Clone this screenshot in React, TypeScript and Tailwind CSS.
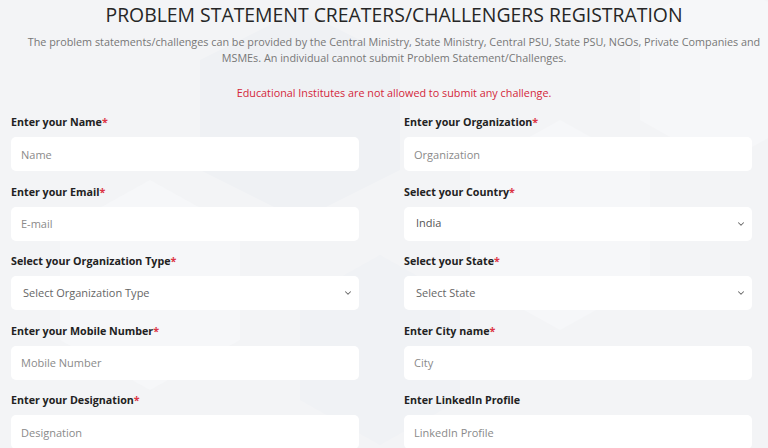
import { ChevronDown } from "lucide-react";

interface Field {
  label: string;
  placeholder: string;
  required?: boolean;
  kind?: "input" | "select";
  value?: string;
}

const fields: Field[] = [
  { label: "Enter your Name", placeholder: "Name", required: true },
  { label: "Enter your Organization", placeholder: "Organization", required: true },
  { label: "Enter your Email", placeholder: "E-mail", required: true },
  { label: "Select your Country", placeholder: "India", required: true, kind: "select", value: "India" },
  { label: "Select your Organization Type", placeholder: "Select Organization Type", required: true, kind: "select" },
  { label: "Select your State", placeholder: "Select State", required: true, kind: "select" },
  { label: "Enter your Mobile Number", placeholder: "Mobile Number", required: true },
  { label: "Enter City name", placeholder: "City", required: true },
  { label: "Enter your Designation", placeholder: "Designation", required: true },
  { label: "Enter LinkedIn Profile", placeholder: "LinkedIn Profile" },
];

function FormField({ field }: { field: Field }) {
  return (
    <div className="flex flex-col">
      <label className="text-[10.7px] leading-[16px] font-bold text-[#222] mb-[7px]">
        {field.label}
        {field.required && <span className="text-[#dc3545]">*</span>}
      </label>
      {field.kind === "select" ? (
        <div className="relative">
          <div
            className={`h-[34px] w-full rounded-[5px] bg-white pl-[12px] flex items-center text-[11px] ${
              field.value ? "text-[#555]" : "text-[#666]"
            }`}
          >
            {field.placeholder}
          </div>
          <ChevronDown
            className="absolute right-[6px] top-[12px] h-[10px] w-[10px] text-[#666]"
            strokeWidth={2.5}
          />
        </div>
      ) : (
        <input
          placeholder={field.placeholder}
          className="h-[34px] w-full rounded-[5px] bg-white px-[10px] text-[11px] text-[#555] placeholder:text-[#8a8a8a] outline-none"
        />
      )}
    </div>
  );
}

export default function App() {
  return (
    <div
      className="relative w-[768px] h-[448px] overflow-hidden bg-[#f3f4f6]"
      style={{ fontFamily: '"Open Sans", "Noto Sans", sans-serif' }}
    >
      {/* faint hexagon backdrop */}
      <svg className="absolute inset-0 h-full w-full" viewBox="0 0 768 448">
        <polygon points="200,60 300,10 400,60 400,170 300,220 200,170" fill="#eff1f4" />
        <polygon points="470,170 560,120 650,170 650,280 560,330 470,280" fill="#f6f7f9" />
        <polygon points="60,230 150,180 240,230 240,340 150,390 60,340" fill="#f6f7f9" />
        <polygon points="300,300 380,255 460,300 460,400 380,445 300,400" fill="#f0f2f5" />
        <polygon points="640,20 720,-25 800,20 800,120 720,165 640,120" fill="#f6f7f9" />
      </svg>

      <div className="relative">
        <div className="text-center pl-[20px]">
          <h1 className="pt-[1px] text-[19.4px] leading-[28px] font-medium text-[#262626]">
            PROBLEM STATEMENT CREATERS/CHALLENGERS REGISTRATION
          </h1>
          <p className="mt-[5px] text-[10.8px] leading-[16px] text-[#777]">
            The problem statements/challenges can be provided by the Central Ministry, State Ministry, Central PSU,
            State PSU, NGOs, Private Companies and MSMEs. An individual cannot submit Problem Statement/Challenges.
          </p>
          <p className="mt-[19px] text-[10.8px] leading-[16px] text-[#d4263a]">
            Educational Institutes are not allowed to submit any challenge.
          </p>
        </div>

        <div className="mt-[13px] grid grid-cols-[348px_348px] gap-x-[45px] gap-y-[12.5px] pl-[11px]">
          {fields.map((f) => (
            <FormField key={f.label} field={f} />
          ))}
        </div>
      </div>
    </div>
  );
}
